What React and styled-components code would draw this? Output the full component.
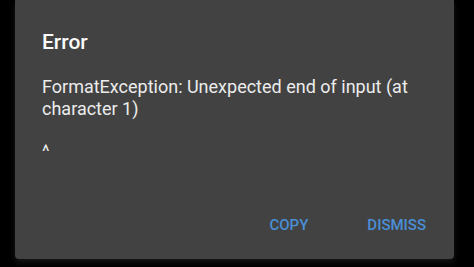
import styled, { createGlobalStyle } from "styled-components";

const GlobalStyle = createGlobalStyle`
  html, body {
    margin: 0;
    padding: 0;
    background: #000;
    width: 474px;
    height: 267px;
    overflow: hidden;
  }
  * { box-sizing: border-box; }
`;

const Screen = styled.div`
  width: 474px;
  height: 267px;
  background: #000;
  padding: 0 20px 0 15px;
  font-family: Roboto, "Noto Sans", sans-serif;
`;

const Dialog = styled.div`
  width: 439px;
  height: 259px;
  background: #424242;
  border-radius: 0 0 4px 4px;
  display: flex;
  flex-direction: column;
  padding: 30px 28px 0 27px;
  box-shadow: 0 3px 6px rgba(40, 40, 40, 0.6);
`;

const Title = styled.h2`
  margin: 0;
  font-size: 21px;
  line-height: 24px;
  font-weight: 500;
  color: #fafafa;
`;

const Message = styled.p`
  margin: 22px 0 0;
  font-size: 18px;
  line-height: 21.5px;
  color: #ececec;
  white-space: pre-wrap;
`;

const Actions = styled.div`
  margin-top: auto;
  margin-bottom: 24px;
  display: flex;
  justify-content: flex-end;
  gap: 59px;
`;

const Action = styled.button`
  background: none;
  border: none;
  padding: 0;
  font-family: inherit;
  font-size: 15px;
  line-height: 20px;
  font-weight: 500;
  color: #4a8fd6;
  cursor: pointer;
`;

export default function App() {
  return (
    <>
      <GlobalStyle />
      <Screen>
        <Dialog>
          <Title>Error</Title>
          <Message>
            {"FormatException: Unexpected end of input (at character 1)\n\n^"}
          </Message>
          <Actions>
            <Action>COPY</Action>
            <Action>DISMISS</Action>
          </Actions>
        </Dialog>
      </Screen>
    </>
  );
}
